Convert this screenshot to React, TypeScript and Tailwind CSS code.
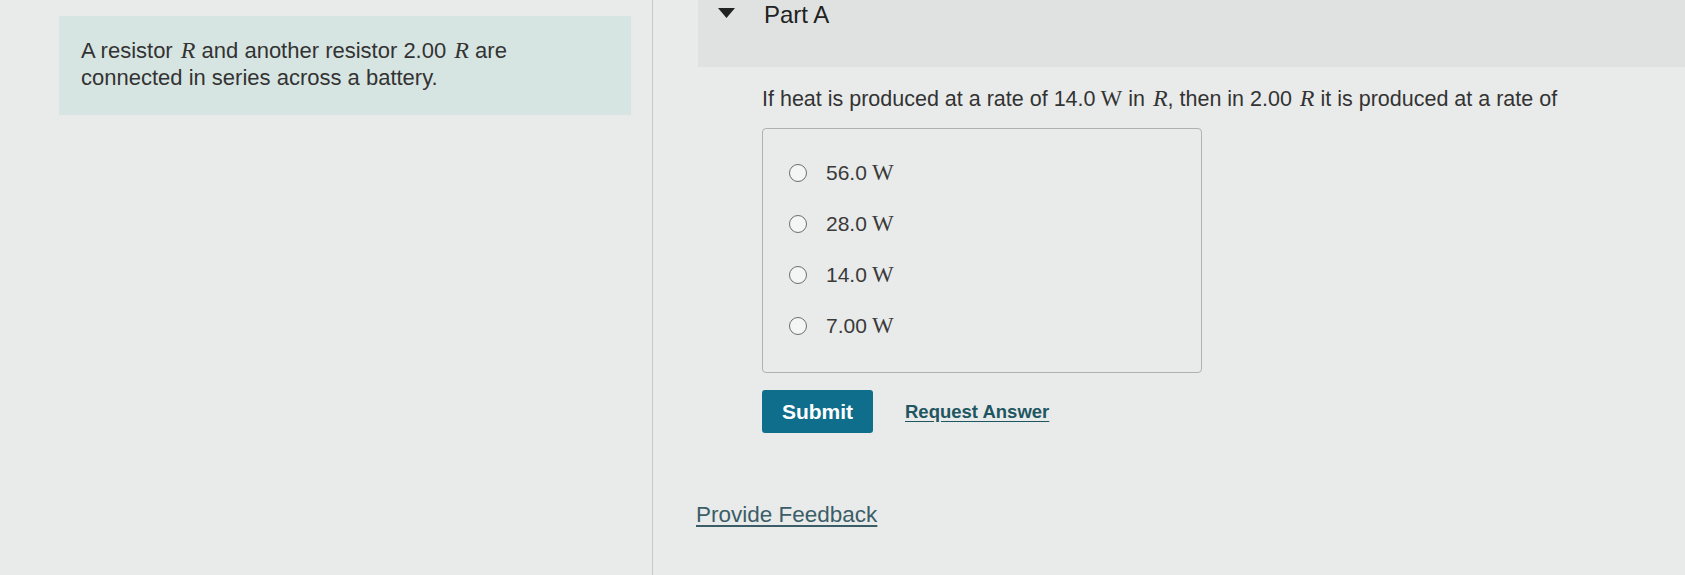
import React from 'react';

const sans = 'font-["Liberation_Sans",Arial,sans-serif]';

function MathR() {
  return <span className='font-["Liberation_Serif",serif] italic text-[24px] ml-[2px]'>R</span>;
}

function Watt() {
  return <span className='font-["Liberation_Serif",serif] text-[23px] ml-[5px]'>W</span>;
}

const OPTIONS = ['56.0', '28.0', '14.0', '7.00'];

export default function App() {
  return (
    <div className={`flex min-h-[575px] w-[1685px] bg-[#e9ebea] text-[#333] ${sans}`}>
      {/* Left: problem intro */}
      <div className="w-[653px] shrink-0 border-r border-[#c4c8c7] pl-[59px] pt-[16px]">
        <div className="w-[572px] h-[99px] bg-[#d7e5e2] pl-[22px] pt-[21px] text-[22px] leading-[27px]">
          A resistor <MathR /> and another resistor 2.00 <MathR /> are
          <br />
          connected in series across a battery.
        </div>
      </div>

      {/* Right: part A */}
      <div className="flex-1 pl-[45px]">
        <div className="h-[67px] bg-[#e0e2e1] flex items-start pl-[20px] pt-[3px]">
          <svg width="17" height="10" viewBox="0 0 17 10" className="mt-[5px]">
            <path d="M0 0 L17 0 L8.5 10 Z" fill="#222" />
          </svg>
          <span className="ml-[29px] text-[24px] leading-[24px] text-[#222]">Part A</span>
        </div>

        <div className="pl-[64px]">
          <p className="mt-[17px] text-[21.5px] leading-[28px]">
            If heat is produced at a rate of 14.0<Watt /> in <MathR />, then in 2.00 <MathR /> it is produced at a rate of
          </p>

          <div className="mt-[15px] w-[440px] h-[245px] border border-[#aeb2b1] rounded-[4px] pt-[33px] pl-[26px] flex flex-col gap-[29px]">
            {OPTIONS.map((v) => (
              <label key={v} className="flex items-center h-[22px]">
                <span className="w-[18px] h-[18px] rounded-full border-[1.5px] border-[#6b6e6e] bg-[#f4f5f5]" />
                <span className="ml-[19px] text-[21px] text-[#3a3a3a]">
                  {v}
                  <Watt />
                </span>
              </label>
            ))}
          </div>

          <div className="mt-[17px] flex items-center">
            <button className="w-[111px] h-[43px] rounded-[3px] bg-[#0f6e8b] text-white font-bold text-[21px]">
              Submit
            </button>
            <a className="ml-[32px] text-[18.5px] font-bold text-[#1e5661] underline underline-offset-[3px]">
              Request Answer
            </a>
          </div>
        </div>

        <a className="block mt-[65px] ml-[-2px] text-[22.5px] text-[#3b5d68] underline underline-offset-[3px] w-fit">
          Provide Feedback
        </a>
      </div>
    </div>
  );
}
